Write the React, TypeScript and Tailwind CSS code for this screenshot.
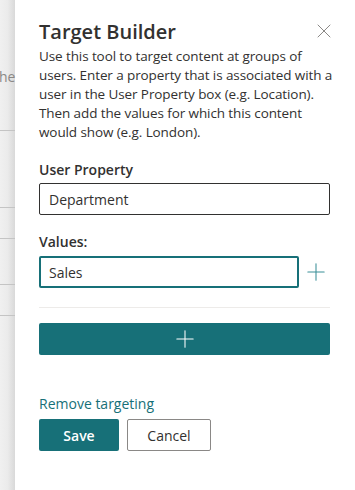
import { X, Plus } from 'lucide-react';

export default function App() {
  return (
    <div
      className="flex h-[490px] w-[355px] overflow-hidden bg-white text-[#323130]"
      style={{ fontFamily: '"Segoe UI", "Open Sans", "Noto Sans", sans-serif' }}
    >
      {/* page behind the panel */}
      <div className="relative w-[15px] shrink-0 bg-gradient-to-r from-[#f0f0f0] via-[#ebebeb] to-[#d9d9d9]">
        <span className="absolute left-[-1px] top-[66px] text-[14px] text-[#8a8886]">he</span>
        <div className="absolute left-0 top-[130px] h-px w-full bg-[#c4c4c4]" />
        <div className="absolute left-0 top-[207px] h-px w-full bg-[#c4c4c4]" />
        <div className="absolute left-0 top-[238px] h-px w-full bg-[#c4c4c4]" />
        <div className="absolute left-0 top-[284px] h-px w-full bg-[#c4c4c4]" />
        <div className="absolute left-0 top-[315px] h-px w-full bg-[#c4c4c4]" />
      </div>

      <div className="flex-1 pl-6 pt-[18px]">
        <div className="flex w-[291px] flex-col">
          <div className="flex items-start justify-between">
            <h1 className="text-[20px] font-semibold leading-[28px] text-[#323130]">Target Builder</h1>
            <button className="-mr-[6px] mt-[1px] text-[#8a8886]">
              <X className="h-6 w-6" strokeWidth={1} />
            </button>
          </div>

          <p className="mt-[1px] whitespace-nowrap text-[13.5px] leading-[19px] tracking-[-0.1px] text-[#323130]">
            Use this tool to target content at groups of
            <br />
            users. Enter a property that is associated with a
            <br />
            user in the User Property box (e.g. Location).
            <br />
            Then add the values for which this content
            <br />
            would show (e.g. London).
          </p>

          <label className="mt-[18px] text-[14px] font-semibold leading-[20px]">User Property</label>
          <div className="mt-[3px] flex h-[32px] items-center rounded-[2px] border border-[#323130] px-[9px] text-[14px]">
            Department
          </div>

          <label className="mt-[17px] text-[14px] font-semibold leading-[20px]">Values:</label>
          <div className="mt-[4px] flex items-center gap-[3px]">
            <div className="flex h-[32px] flex-1 items-center rounded-[2px] border-2 border-[#177078] px-[8px] text-[14px]">
              Sales
            </div>
            <Plus className="h-[28px] w-[28px] text-[#3a8f98]" strokeWidth={0.9} />
          </div>

          <div className="mt-[19px] h-px bg-[#edebe9]" />

          <button className="mt-[15px] flex h-[32px] items-center justify-center rounded-[2px] bg-[#177078] text-white">
            <Plus className="h-[28px] w-[28px]" strokeWidth={0.9} />
          </button>

          <a className="mt-[39px] text-[14px] leading-[20px] text-[#177078]">Remove targeting</a>

          <div className="mt-[5px] flex gap-2">
            <button className="h-[32px] w-[80px] rounded-[2px] bg-[#177078] text-[14px] font-semibold text-white">
              Save
            </button>
            <button className="h-[32px] w-[84px] rounded-[2px] border border-[#8a8886] bg-white text-[14px] text-[#323130]">
              Cancel
            </button>
          </div>
        </div>
      </div>
    </div>
  );
}
